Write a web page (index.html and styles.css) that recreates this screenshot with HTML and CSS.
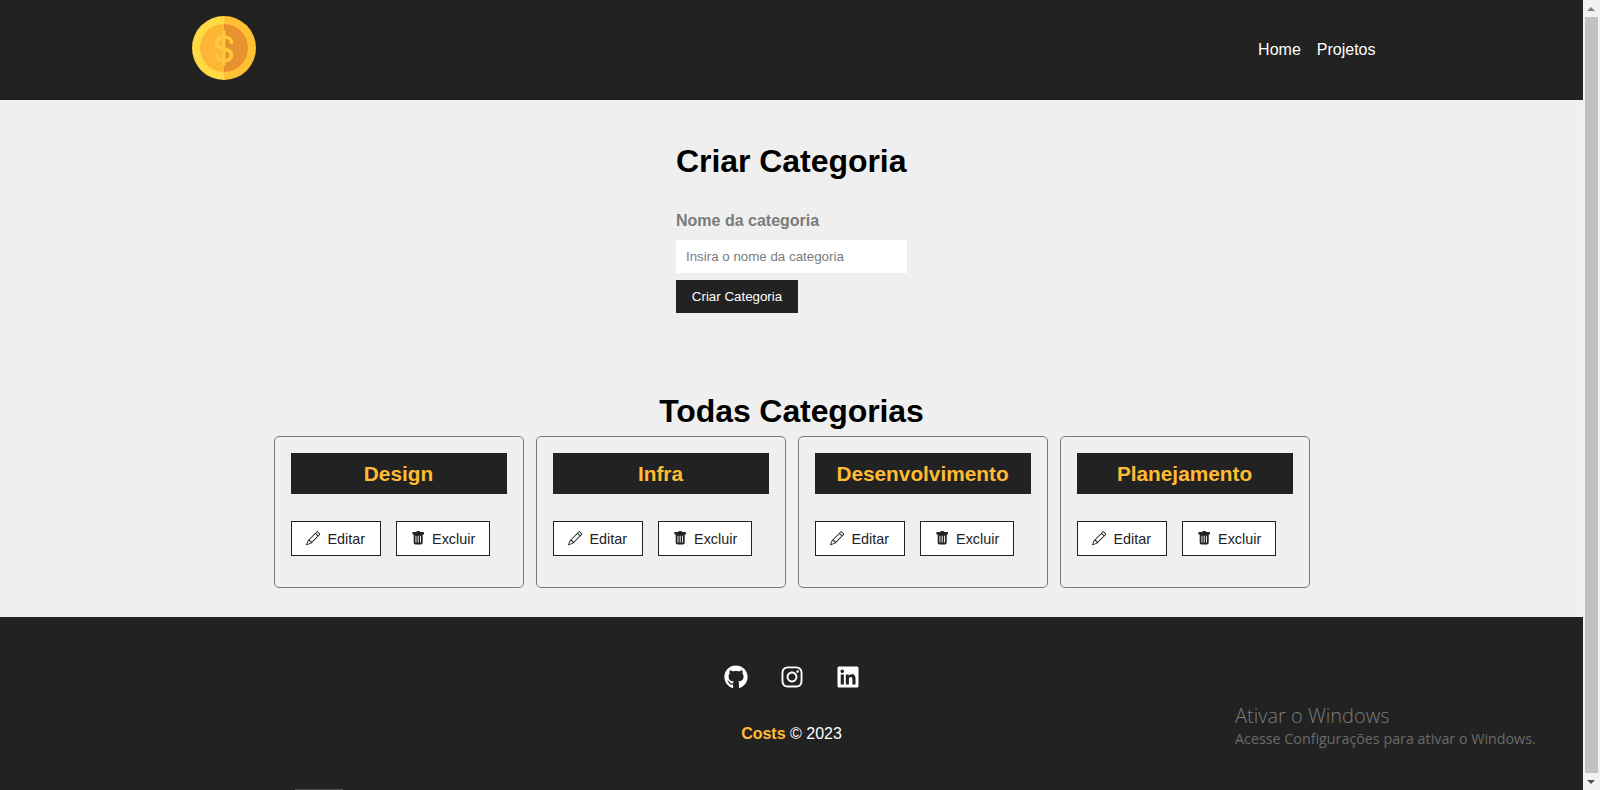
FILE: index.html
```html
<!DOCTYPE html>
<html lang="pt-BR">
<head>
<meta charset="utf-8">
<title>Costs</title>
<link rel="stylesheet" href="styles.css">
</head>
<body>
<div class="app">
  <div class="page">
    <header class="navbar">
      <div class="navbar-inner">
        <a class="logo" href="#" aria-label="Costs">
          <svg width="64" height="64" viewBox="0 0 64 64">
            <path d="M32 0a32 32 0 0 0 0 64z" fill="#ffda44"/>
            <path d="M32 0a32 32 0 0 1 0 64z" fill="#ffc033"/>
            <path d="M32 8a24 24 0 0 0 0 48z" fill="#ffb636"/>
            <path d="M32 8a24 24 0 0 1 0 48z" fill="#e8912f"/>
            <path d="M32 15.500v33" stroke="#ffcb3d" stroke-width="2.800" stroke-linecap="round" fill="none"/>
            <path d="M39.500 26.500c0-3.500-3-5.500-7.500-5.500s-7.500 2.800-7.500 6c0 8.500 15 3.500 15 12 0 3.500-3 5.800-7.500 5.800s-7.500-2.300-7.500-5.800" stroke="#ffcb3d" stroke-width="3.500" stroke-linecap="round" fill="none"/>
          </svg>
        </a>
        <ul class="nav-list">
          <li><a href="#">Home</a></li>
          <li><a href="#">Projetos</a></li>
        </ul>
      </div>
    </header>

    <main class="content">
      <section class="create">
        <h1 class="create-title">Criar Categoria</h1>
        <form class="form">
          <label class="form-label" for="nome">Nome da categoria</label>
          <input class="form-input" id="nome" type="text" placeholder="Insira o nome da categoria">
          <button class="form-submit" type="button">Criar Categoria</button>
        </form>
      </section>

      <h1 class="list-title">Todas Categorias</h1>
      <section class="cards">
        <article class="card">
          <h2 class="card-title">Design</h2>
          <div class="card-actions">
            <button class="action action-edit" type="button"><svg class="ico" viewBox="0 0 16 16"><use href="#pencil"/></svg>Editar</button>
            <button class="action" type="button"><svg class="ico" viewBox="0 0 16 16"><use href="#trash"/></svg>Excluir</button>
          </div>
        </article>
        <article class="card">
          <h2 class="card-title">Infra</h2>
          <div class="card-actions">
            <button class="action action-edit" type="button"><svg class="ico" viewBox="0 0 16 16"><use href="#pencil"/></svg>Editar</button>
            <button class="action" type="button"><svg class="ico" viewBox="0 0 16 16"><use href="#trash"/></svg>Excluir</button>
          </div>
        </article>
        <article class="card">
          <h2 class="card-title">Desenvolvimento</h2>
          <div class="card-actions">
            <button class="action action-edit" type="button"><svg class="ico" viewBox="0 0 16 16"><use href="#pencil"/></svg>Editar</button>
            <button class="action" type="button"><svg class="ico" viewBox="0 0 16 16"><use href="#trash"/></svg>Excluir</button>
          </div>
        </article>
        <article class="card">
          <h2 class="card-title">Planejamento</h2>
          <div class="card-actions">
            <button class="action action-edit" type="button"><svg class="ico" viewBox="0 0 16 16"><use href="#pencil"/></svg>Editar</button>
            <button class="action" type="button"><svg class="ico" viewBox="0 0 16 16"><use href="#trash"/></svg>Excluir</button>
          </div>
        </article>
      </section>
    </main>

    <footer class="footer">
      <ul class="social">
        <li><svg class="social-ico" viewBox="0 0 496 512"><path fill="currentColor" d="M165.900 397.400c0 2-2.300 3.600-5.200 3.600-3.300 0-5.600-1.600-5.600-3.600 0-2 2.300-3.600 5.200-3.600 3-.3 5.600 1.300 5.600 3.600zm-31.100-4.500c-.7 2 1.300 4.300 4.300 4.900 2.600 1 5.600 0 6.200-2s-1.300-4.300-4.300-5.200c-2.600-.7-5.500.3-6.200 2.300zm44.200-1.700c-2.900.7-4.900 2.600-4.600 4.900.3 2 2.900 3.300 5.900 2.600 2.900-.7 4.900-2.600 4.600-4.600-.3-1.900-3-3.200-5.900-2.900zM244.800 8C106.100 8 0 113.300 0 252c0 110.900 69.800 205.800 169.500 239.200 12.800 2.300 17.300-5.600 17.300-12.100 0-6.200-.3-40.400-.3-61.400 0 0-70 15-84.700-29.800 0 0-11.400-29.100-27.800-36.600 0 0-22.900-15.700 1.600-15.400 0 0 24.900 2 38.600 25.800 21.900 38.600 58.600 27.500 72.900 20.900 2.300-16 8.800-27.100 16-33.700-55.900-6.200-112.300-14.300-112.300-110.500 0-27.500 7.600-41.300 23.600-58.900-2.600-6.500-11.100-33.300 2.600-67.900 20.900-6.500 69 27 69 27 20-5.600 41.500-8.500 62.800-8.500s42.800 2.900 62.800 8.500c0 0 48.100-33.600 69-27 13.700 34.700 5.200 61.400 2.600 67.900 16 17.700 25.800 31.500 25.800 58.900 0 96.500-58.900 104.200-114.800 110.500 9.200 7.900 17 22.900 17 46.400 0 33.700-.3 75.400-.3 83.600 0 6.500 4.600 14.400 17.300 12.100C428.200 457.800 496 362.900 496 252 496 113.300 383.500 8 244.800 8z"/></svg></li>
        <li><svg class="social-ico" viewBox="0 0 448 512"><path fill="currentColor" d="M224.100 141c-63.600 0-114.900 51.300-114.900 114.900s51.300 114.900 114.900 114.900S339 319.500 339 255.900 287.700 141 224.100 141zm0 189.600c-41.100 0-74.700-33.500-74.700-74.700s33.500-74.700 74.700-74.700 74.700 33.500 74.700 74.700-33.600 74.700-74.700 74.700zm146.400-194.300c0 14.900-12 26.800-26.800 26.800-14.900 0-26.800-12-26.800-26.800s12-26.800 26.800-26.800 26.800 12 26.800 26.800zm76.100 27.200c-1.700-35.900-9.900-67.700-36.200-93.900-26.200-26.200-58-34.400-93.900-36.200-37-2.100-147.900-2.100-184.900 0-35.800 1.700-67.600 9.900-93.900 36.100s-34.400 58-36.200 93.900c-2.100 37-2.100 147.900 0 184.900 1.700 35.900 9.900 67.700 36.200 93.900s58 34.400 93.900 36.200c37 2.100 147.900 2.100 184.900 0 35.900-1.700 67.700-9.900 93.900-36.200 26.200-26.200 34.400-58 36.200-93.900 2.100-37 2.100-147.800 0-184.800zM398.800 388c-7.800 19.600-22.900 34.700-42.600 42.600-29.500 11.700-99.500 9-132.100 9s-102.700 2.600-132.100-9c-19.600-7.800-34.700-22.900-42.600-42.600-11.700-29.500-9-99.500-9-132.100s-2.600-102.700 9-132.100c7.800-19.600 22.900-34.700 42.600-42.600 29.500-11.700 99.500-9 132.100-9s102.700-2.600 132.100 9c19.600 7.800 34.700 22.900 42.600 42.600 11.700 29.500 9 99.500 9 132.100s2.700 102.700-9 132.100z"/></svg></li>
        <li><svg class="social-ico" viewBox="0 0 448 512"><path fill="currentColor" d="M416 32H31.900C14.300 32 0 46.500 0 64.300v383.400C0 465.500 14.300 480 31.900 480H416c17.600 0 32-14.500 32-32.300V64.300c0-17.800-14.400-32.300-32-32.300zM135.400 416H69V202.200h66.500V416zm-33.200-243c-21.300 0-38.500-17.300-38.500-38.500S80.900 96 102.200 96c21.200 0 38.500 17.300 38.500 38.500 0 21.300-17.200 38.500-38.500 38.500zm282.100 243h-66.400V312c0-24.800-.5-56.700-34.500-56.700-34.600 0-39.900 27-39.900 54.900V416h-66.400V202.200h63.700v29.200h.9c8.900-16.800 30.600-34.500 62.900-34.500 67.200 0 79.700 44.300 79.700 101.900V416z"/></svg></li>
      </ul>
      <p class="copy"><span class="brand">Costs</span> &copy; 2023</p>
      <div class="watermark">
        <div class="watermark-title">Ativar o Windows</div>
        <div class="watermark-sub">Acesse Configurações para ativar o Windows.</div>
      </div>
      <div class="taskbar-sliver"></div>
    </footer>
  </div>

  <div class="scrollbar" aria-hidden="true">
    <div class="arrow arrow-up"></div>
    <div class="thumb"></div>
    <div class="arrow arrow-down"></div>
  </div>
</div>

<svg class="defs" width="0" height="0">
  <symbol id="pencil" viewBox="0 0 16 16"><path fill="currentColor" d="M12.146.146a.5.5 0 0 1 .708 0l3 3a.5.5 0 0 1 0 .708l-10 10a.5.5 0 0 1-.168.11l-5 2a.5.5 0 0 1-.65-.65l2-5a.5.5 0 0 1 .11-.168l10-10zM11.207 2.500 13.500 4.793 14.793 3.500 12.500 1.207 11.207 2.500zm1.586 3L10.500 3.207 4 9.707V10h.5a.5.5 0 0 1 .5.5v.5h.5a.5.5 0 0 1 .5.5v.5h.293l6.500-6.500zm-9.761 5.175-.106.106-1.528 3.821 3.821-1.528.106-.106A.5.5 0 0 1 5 12.500V12h-.5a.5.5 0 0 1-.5-.5V11h-.5a.5.5 0 0 1-.468-.325z"/></symbol>
  <symbol id="trash" viewBox="0 0 16 16"><path fill="currentColor" d="M2.500 1a1 1 0 0 0-1 1v1a1 1 0 0 0 1 1H3v9a2 2 0 0 0 2 2h6a2 2 0 0 0 2-2V4h.5a1 1 0 0 0 1-1V2a1 1 0 0 0-1-1H10a1 1 0 0 0-1-1H7a1 1 0 0 0-1 1H2.500zm3 4a.5.5 0 0 1 .5.5v7a.5.5 0 0 1-1 0v-7a.5.5 0 0 1 .5-.5zM8 5a.5.5 0 0 1 .5.5v7a.5.5 0 0 1-1 0v-7A.5.5 0 0 1 8 5zm3 .5v7a.5.5 0 0 1-1 0v-7a.5.5 0 0 1 1 0z"/></symbol>
</svg>
</body>
</html>
```
FILE: styles.css
```css
* { box-sizing: border-box; margin: 0; padding: 0; }
html, body { height: 790px; overflow: hidden; }
body { font-family: "Liberation Sans", Arial, sans-serif; background: #efefef; color: #000; }
.defs { position: absolute; }
.app { display: flex; height: 790px; }
.page { flex: 1; min-width: 0; display: flex; flex-direction: column; }

.navbar { height: 100px; background: #222; display: flex; justify-content: center; align-items: center; flex: none; }
.navbar-inner { width: 1200px; display: flex; justify-content: space-between; align-items: center; }
.logo { display: block; height: 64px; margin-bottom: 4px; }
.nav-list { display: flex; list-style: none; padding-right: 16px; }
.nav-list li { margin-left: 16px; }
.nav-list a { color: #fff; text-decoration: none; font-size: 16px; }

.content { flex: 1; display: flex; flex-direction: column; align-items: center; }
.create { width: 231px; padding-top: 43px; }
.create-title { font-size: 32px; line-height: 37px; font-weight: 700; margin-bottom: 32px; letter-spacing: -0.05px; white-space: nowrap; }
.form { display: flex; flex-direction: column; align-items: flex-start; }
.form-label { font-size: 16px; line-height: 18px; font-weight: 700; color: #7b7b7b; margin-bottom: 10px; }
.form-input { width: 231px; height: 33px; border: 0; padding: 0 10px; font: 13.333px "Liberation Sans", Arial, sans-serif; background: #fff; margin-bottom: 7px; outline: 0; }
.form-input::placeholder { color: #7b7b7b; opacity: 1; }
.form-submit { width: 122px; height: 33px; background: #222; color: #fff; border: 0; font: 13.333px "Liberation Sans", Arial, sans-serif; }

.list-title { font-size: 32px; line-height: 37px; font-weight: 700; margin-top: 80px; margin-bottom: 6px; letter-spacing: -0.1px; }
.cards { display: flex; justify-content: center; gap: 12px; }
.card { width: 250px; height: 152px; border: 1px solid #7a7a7a; border-radius: 5px; padding: 16px; }
.card-title { height: 41px; background: #222; color: #ffbb33; font-size: 20.8px; line-height: 41px; font-weight: 700; text-align: center; margin-bottom: 27px; }
.card-actions { display: flex; gap: 15px; }
.action { height: 35px; padding: 0 14px; background: #fff; border: 1px solid #222; color: #222; font: 14.4px "Liberation Sans", Arial, sans-serif; display: flex; align-items: center; justify-content: center; gap: 7.2px; }
.action-edit { width: 90px; }
.ico { width: 14.4px; height: 14.4px; }

.footer { position: relative; height: 173px; flex: none; background: #222; color: #fff; padding-top: 48px; text-align: center; }
.social { display: flex; justify-content: center; gap: 32px; list-style: none; margin-bottom: 36px; }
.social li { height: 24px; }
.social-ico { height: 24px; width: 24px; display: block; }
.copy { font-size: 16px; line-height: 18px; }
.brand { color: #ffbb33; font-weight: 700; }
.watermark { position: absolute; left: 1235px; top: 86px; text-align: left; color: #7a7a7a; font-family: "Open Sans", sans-serif; font-weight: 300; }
.watermark-title { font-size: 20px; line-height: 26px; }
.watermark-sub { font-size: 14.3px; line-height: 19px; font-weight: 400; color: #6a6a6a; }
.taskbar-sliver { position: absolute; left: 295px; bottom: 0; width: 48px; height: 1px; background: #555; }

.scrollbar { width: 17px; flex: none; background: #f1f1f1; display: flex; flex-direction: column; align-items: center; }
.arrow { height: 17px; flex: none; width: 100%; position: relative; }
.arrow::after { content: ""; position: absolute; left: 4px; border-left: 4px solid transparent; border-right: 4px solid transparent; }
.arrow-up::after { top: 7px; border-bottom: 4px solid #7f7f7f; }
.arrow-down::after { top: 7px; border-top: 4px solid #505050; }
.thumb { flex: 1; width: 13px; background: #c1c1c1; }
```
